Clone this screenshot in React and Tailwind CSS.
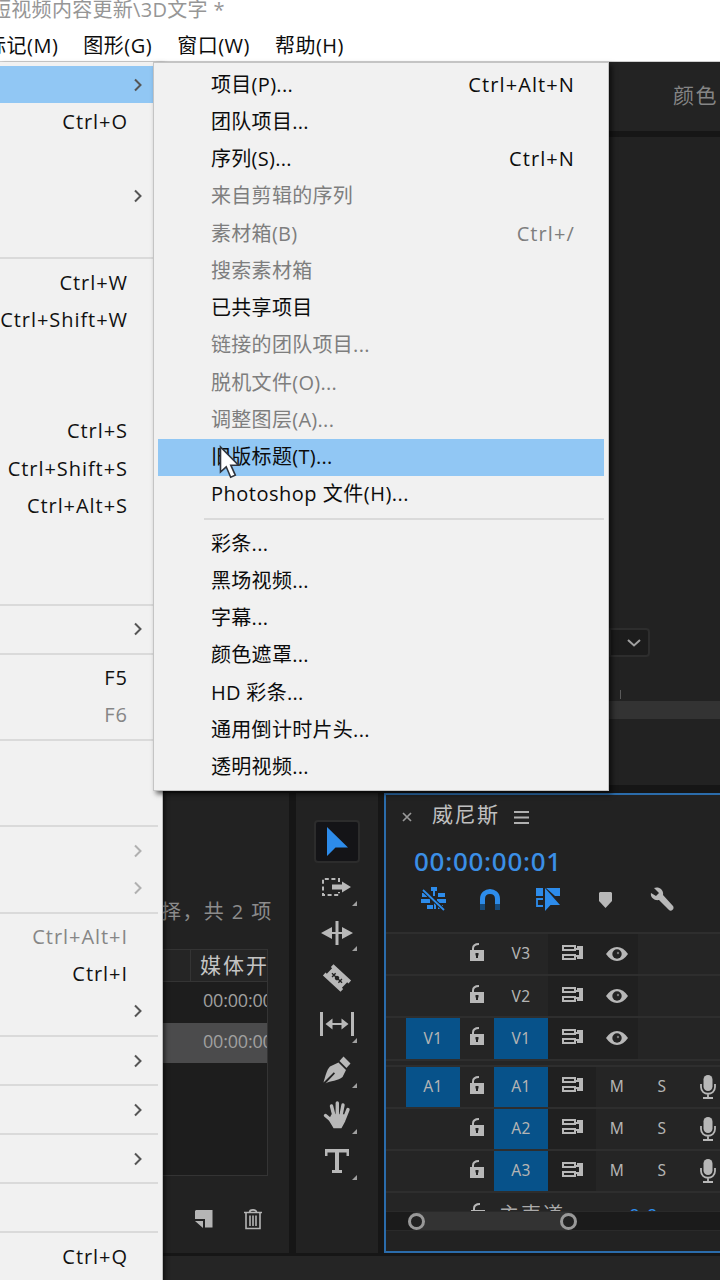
import clsx from 'clsx';

const MENU_BAR = ['标记(M)', '图形(G)', '窗口(W)', '帮助(H)'];

// null is a separator, {} is a row whose label lies outside the window
const FILE_MENU = [
  { arrow: true, active: true },
  { keys: 'Ctrl+O' },
  {},
  { arrow: true },
  {},
  null,
  { keys: 'Ctrl+W' },
  { keys: 'Ctrl+Shift+W' },
  {},
  {},
  { keys: 'Ctrl+S' },
  { keys: 'Ctrl+Shift+S' },
  { keys: 'Ctrl+Alt+S' },
  {},
  {},
  null,
  { arrow: true },
  null,
  { keys: 'F5' },
  { keys: 'F6', disabled: true },
  null,
  {},
  {},
  null,
  { arrow: true, disabled: true },
  { arrow: true, disabled: true },
  null,
  { keys: 'Ctrl+Alt+I', disabled: true },
  { keys: 'Ctrl+I' },
  { arrow: true },
  null,
  { arrow: true },
  null,
  { arrow: true },
  null,
  { arrow: true },
  null,
  {},
  null,
  { keys: 'Ctrl+Q' },
  null,
];

const NEW_MENU = [
  { label: '项目(P)...', keys: 'Ctrl+Alt+N' },
  { label: '团队项目...' },
  { label: '序列(S)...', keys: 'Ctrl+N' },
  { label: '来自剪辑的序列', disabled: true },
  { label: '素材箱(B)', keys: 'Ctrl+/', disabled: true },
  { label: '搜索素材箱', disabled: true },
  { label: '已共享项目' },
  { label: '链接的团队项目...', disabled: true },
  { label: '脱机文件(O)...', disabled: true },
  { label: '调整图层(A)...', disabled: true },
  { label: '旧版标题(T)...', active: true },
  { label: 'Photoshop 文件(H)...', wide: true },
  null,
  { label: '彩条...' },
  { label: '黑场视频...' },
  { label: '字幕...' },
  { label: '颜色遮罩...' },
  { label: 'HD 彩条...' },
  { label: '通用倒计时片头...' },
  { label: '透明视频...' },
];

const VIDEO_TRACKS = [
  { name: 'V3' },
  { name: 'V2' },
  { name: 'V1', source: 'V1', on: true },
];

const AUDIO_TRACKS = [
  { name: 'A1', source: 'A1', on: true },
  { name: 'A2', on: true },
  { name: 'A3', on: true },
];

function Chevron({ className }) {
  return (
    <svg viewBox="0 0 8 14" className={clsx('h-3.5 w-2', className)} fill="none" stroke="currentColor" strokeWidth="2">
      <path d="M1 1.5 6.5 7 1 12.5" />
    </svg>
  );
}

function FileMenu() {
  return (
    <div className="absolute top-[62px] left-0 h-[1218px] w-[163px] border-r border-[#bdbdbd] bg-[#f1f1f1] pt-[4.2px] shadow-[2px_2px_4px_#0008]">
      {FILE_MENU.map((item, index) =>
        item === null ? (
          <div key={index} className="flex h-[11.9px] items-center pr-1">
            <div className="h-0.5 w-full bg-[#dadada]" />
          </div>
        ) : (
          <div
            key={index}
            className={clsx(
              'flex h-[37.2px] items-center justify-end whitespace-nowrap',
              item.active && 'bg-[#91c7f4]',
              item.disabled ? 'text-[#868686]' : 'text-[#111]'
            )}
          >
            {item.keys && <span className="mr-[34px] tracking-[0.95px]">{item.keys}</span>}
            {item.arrow && (
              <Chevron className={clsx('mr-5', item.disabled ? 'text-[#b0b0b0]' : 'text-[#555]')} />
            )}
          </div>
        )
      )}
    </div>
  );
}

function NewMenu() {
  return (
    <div className="absolute top-[62px] left-[153px] h-[729px] w-[456px] border border-[#c4c4c4] bg-[#f1f1f1] px-1 pt-[3px] shadow-[3px_3px_5px_#0009]">
      {NEW_MENU.map((item, index) =>
        item === null ? (
          <div key={index} className="flex h-3 items-center pl-[46px]">
            <div className="h-0.5 w-full bg-[#dadada]" />
          </div>
        ) : (
          <div
            key={index}
            className={clsx(
              'flex h-[37.25px] items-center justify-between pr-[29px] pl-[53px] whitespace-nowrap',
              item.active && 'bg-[#91c7f4]',
              item.disabled ? 'text-[#7e7e7e]' : 'text-[#0c0c0c]'
            )}
          >
            <span className={clsx(item.wide && 'tracking-[0.5px]')}>{item.label}</span>
            <span className="tracking-[1.1px]">{item.keys}</span>
          </div>
        )
      )}
    </div>
  );
}

function Pointer() {
  return (
    <svg className="absolute top-[445px] left-[218px] h-9 w-6" viewBox="0 0 24 36">
      <path d="M2.5 2v25l5.7-5.2 4.5 10.4 4.6-2-4.5-10h7.7z" fill="#fff" stroke="#30343c" strokeWidth="1.6" />
    </svg>
  );
}

function Monitor() {
  return (
    <div className="flex h-[723px] flex-col bg-[#161616] pl-[609px]">
      <div className="h-[69px] bg-[#232323] pt-[18px] pl-16 text-[21px] leading-[30px] tracking-[1.6px] whitespace-nowrap text-[#858585]">
        颜色
      </div>
      <div className="mt-1.5 flex-1 bg-[#222]">
        <div className="mt-[491px] flex h-[29px] w-[41px] items-center justify-end rounded-r border-2 border-[#2d2d2d] bg-[#1c1c1c] pr-[7px]">
          <svg viewBox="0 0 14 8" className="h-2 w-3.5" fill="none" stroke="#a0a0a0" strokeWidth="2">
            <path d="m1 1 6 5.5L13 1" />
          </svg>
        </div>
        <div className="mt-[33px] ml-[11px] h-[9px] w-px bg-[#5a5a5a]" />
        <div className="mt-0.5 h-[18px] bg-[#333]" />
      </div>
    </div>
  );
}

function ProjectPanel() {
  return (
    <div className="w-[289px] shrink-0 bg-[#222] pl-[163px]">
      <div className="h-[156px] overflow-hidden pt-[104px] text-[20px] leading-[30px] tracking-[1.4px] whitespace-nowrap text-[#8c8c8c]">
        <span className="-ml-0.5">择，共 2 项</span>
      </div>
      <div className="h-[227px] w-[105px] overflow-hidden border-y border-r border-[#343434] bg-[#1d1d1d]">
        <div className="flex h-8 items-center border-b border-[#343434] bg-[#252525] text-[21px] tracking-[2px] whitespace-nowrap text-[#c4c4c4]">
          <div className="h-full w-7 shrink-0 border-r border-[#343434]" />
          <span className="ml-[9px]">媒体开始</span>
        </div>
        <div className="flex h-[41px] items-center pb-1 pl-10 text-[18px] tracking-[-0.2px] text-[#a0a0a0]">
          00:00:00:00
        </div>
        <div className="flex h-10 items-center bg-[#4b4b4c] pb-1 pl-10 text-[18px] tracking-[-0.2px] text-[#a0a0a0]">
          00:00:00:00
        </div>
      </div>
      <div className="flex items-center pt-8 pl-8">
        <svg viewBox="0 0 18 18" className="h-[18px] w-[18px]" fill="#b5b5b5">
          <path d="M1 0h16.500v17.500H10V9H0V1zM0 11h8v7z" />
        </svg>
        <svg viewBox="0 0 20 22" className="ml-[30px] h-[22px] w-5" fill="none" stroke="#b5b5b5" strokeWidth="1.600">
          <path d="M1 4.5h18M6.500 4.500C6.500 1 13.500 1 13.500 4.500M3 5v15.500h14V5M7 7.500v10.500M10 7.500v10.500M13 7.500v10.500" />
        </svg>
      </div>
    </div>
  );
}

const TOOLS = [
  // track select
  <g key="a">
    <path d="M18 7V4H2v16h16v-3" fill="none" stroke="#b8b8b8" strokeWidth="2" strokeDasharray="4 2.600" />
    <path d="M11 9.500h10V6.500l9 5.500-9 5.500v-3H11z" />
  </g>,
  // ripple edit
  <path key="r" d="M14.500 0h3v24h-3zM0 12l11-6v5h10V6l11 6-11 6v-5H11v5z" />,
  // razor
  <g key="z" transform="translate(16 12) rotate(43) scale(.86) translate(-16 -12)">
    <path d="M2 3h28v4.500h-2v9h2V21H2v-4.500h2v-9H2z" />
    <path d="M8 12h16M11 9v6M21 9v6" stroke="#222" strokeWidth="1.600" />
    <circle cx="16" cy="12" r="2.600" fill="#222" />
  </g>,
  // slip
  <path key="s" d="M-1 0h3v24h-3zM30 0h3v24h-3zM4.500 12l7-5.500v4.500h9V6.500l7 5.500-7 5.500V13h-9v4.500z" />,
  // pen
  <g key="p">
    <path d="M2.500 24.500C4.500 18 5.500 12 9 8.500l8.500-4 7.500 7.500-3.500 7C17.500 23 9 22.500 4.500 25.500L14 15.500l-1.200-1.200z" />
    <path d="m18.500 3 4-4.500 7 7-4 4.500z" />
  </g>,
  // hand
  <g key="h" fill="none" stroke="#b8b8b8" strokeWidth="3.400" strokeLinecap="round">
    <path d="m10.500 3 2.800 11M16.300 0v12M22 2l-2.300 12M27 6.500l-4 10M4.500 12.500l6 5" />
    <path d="M11 12h11.500l1 6-3.500 6.500h-7L8.500 17z" fill="#b8b8b8" strokeWidth="1.500" />
  </g>,
  // type
  <path key="t" d="M4 0h24v7h-2.500V3.500h-7.500V21h3v3H11v-3h3V3.500H6.500V7H4z" />,
];

function ToolBar() {
  return (
    <div className="ml-[7px] flex w-[82px] shrink-0 flex-col items-center bg-[#222] pt-[27px]">
      <div className="mb-px flex h-[43px] w-[46px] items-center justify-center rounded border-2 border-[#2c2c2c] bg-[#141417]">
        <svg viewBox="0 0 21 29" className="h-[29px] w-[21px]" fill="#2d8ceb">
          <path d="M0 0v29l8.500-8.500H21z" />
        </svg>
      </div>
      {TOOLS.map((icon, index) => (
        <div key={index} className="relative flex h-[45.7px] w-[46px] items-center justify-center">
          <svg viewBox="0 0 32 24" className="h-6 w-8 overflow-visible" fill="#b8b8b8">
            {icon}
          </svg>
          {index !== 2 && (
            <svg viewBox="0 0 5 5" className="absolute right-[3px] bottom-1 h-[5px] w-[5px]" fill="#a0a0a0">
              <path d="M5 0v5H0z" />
            </svg>
          )}
        </div>
      ))}
    </div>
  );
}

function Lock() {
  return (
    <svg viewBox="0 0 16 18" className="h-[18px] w-4" fill="#b8b8b8">
      <path d="M1 7h14v11H1z" />
      <path d="M4 8V5.500C4 2.500 6 1 10 1" fill="none" stroke="#b8b8b8" strokeWidth="2" />
      <path d="M6.500 10h3v2.500H9V15H7v-2.500h-.5z" fill="#222" />
    </svg>
  );
}

function SyncLock() {
  return (
    <svg viewBox="0 0 21 17" className="h-[17px] w-[21px]" fill="none" stroke="#b8b8b8" strokeWidth="2">
      <path d="M1 2h12v4H1zM1 11h12v4H1z" />
      <path d="M13 5h3V4M13 12h3v1" />
      <path d="M15 2h6v13h-6v-3h2V5h-2z" fill="#b8b8b8" stroke="none" />
    </svg>
  );
}

function Eye() {
  return (
    <svg viewBox="0 0 22 14" className="h-3.5 w-[22px]">
      <path d="M0 7C6-2.300 16-2.300 22 7c-6 9.300-16 9.300-22 0z" fill="#b8b8b8" />
      <circle cx="11" cy="7" r="4.700" fill="#222" />
      <circle cx="12" cy="6" r="1.200" fill="#777" />
    </svg>
  );
}

function Mic() {
  return (
    <svg viewBox="0 0 16 24" className="h-6 w-4" fill="none" stroke="#b8b8b8" strokeWidth="1.800">
      <rect x="3.500" y="0" width="9" height="16" rx="4.500" fill="#b8b8b8" stroke="none" />
      <path d="M1 9v3c0 9 14 9 14 0V9M8 18.500V22M3 23h10" />
    </svg>
  );
}

function Track({ track, audio }) {
  return (
    <div className="flex h-[42.2px] border-b-2 border-[#2e2e2e] pl-5 font-['Noto_Sans','Liberation_Sans',sans-serif] text-[15.500px] text-[#b4b4b4]">
      <div className={clsx('flex w-[54px] shrink-0 items-center justify-center', track.source && 'bg-[#07528a]')}>
        {track.source}
      </div>
      <div className="flex w-[34px] shrink-0 items-center justify-center pb-1">
        <Lock />
      </div>
      <div className={clsx('flex w-[54px] shrink-0 items-center justify-center', track.on && 'bg-[#07528a]')}>
        {track.name}
      </div>
      <div className="flex w-12 shrink-0 items-center justify-center bg-[#202020] pb-1">
        <SyncLock />
      </div>
      <div className={clsx('flex w-[42px] shrink-0 items-center justify-center', !audio && 'bg-[#202020]')}>
        {audio ? 'M' : <Eye />}
      </div>
      {audio && (
        <>
          <div className="flex w-12 shrink-0 items-center justify-center">S</div>
          <div className="flex w-11 shrink-0 items-center justify-center">
            <Mic />
          </div>
        </>
      )}
    </div>
  );
}

function TimelineTools() {
  return (
    <div className="flex h-[26px] items-center pl-[35px]">
      <svg viewBox="0 0 26 24" className="h-6 w-[26px]" fill="#2d8ceb">
        <path d="M10 0h6v4h-2v5h-2V4h-2zM17 6h7v4h-7zM1 6h5v4H1zM0 12h9v4H0zM16 12h9v4h-9zM6 18h6v4H6zM13 16h2v6h-2zM17 18h5v4h-5z" />
        <path d="m2 3 21 20" stroke="#222" strokeWidth="4" />
        <path d="m2 3 21 20" stroke="#2d8ceb" strokeWidth="1.800" />
      </svg>
      <svg viewBox="0 0 20 21" className="ml-[33px] h-[21px] w-5" fill="none" strokeWidth="5">
        <path d="M2.500 15V10c0-10 15-10 15 0v5" stroke="#2d8ceb" />
        <path d="M2.500 15v6M17.500 15v6" stroke="#174b7c" />
      </svg>
      <svg viewBox="0 0 25 24" className="ml-9 h-6 w-[25px]" fill="#2d8ceb">
        <path d="M0 1h7v8H0zM9 1h15v8h-5L10 1z" />
        <path d="M7 12H1v7h6" fill="none" stroke="#2d8ceb" strokeWidth="1.800" />
        <path d="M9 1v23l5.500-6H24z" />
      </svg>
      <svg viewBox="0 0 14 16" className="ml-[38px] mt-0.5 h-4 w-[14px] shrink-0" fill="#b8b8b8">
        <path d="M1 0h11l1 1v8l-6.500 7L0 9V1z" />
      </svg>
      <svg viewBox="0 0 24 25" className="ml-[37px] h-[25px] w-6" fill="#b8b8b8">
        <path d="M4 1c5-2 10 2 9 7l10 11c2 3-2 6-4 4L9 13C4 14 0 10 1 6l5 3 3-3z" />
      </svg>
    </div>
  );
}

function ScrollKnob() {
  return <div className="h-[17px] w-[17px] rounded-full border-[3px] border-[#999] bg-[#222]" />;
}

function Timeline() {
  return (
    <div className="ml-1.5 h-[460px] w-[360px] shrink-0 overflow-hidden border-2 border-[#2b6cab] bg-[#222]">
      <div className="flex h-[39px] items-center pl-4 text-[#c0c0c0]">
        <svg viewBox="0 0 10 10" className="mt-1 h-2.5 w-2.5" stroke="#999" strokeWidth="1.700">
          <path d="m1 1 8 8M9 1 1 9" />
        </svg>
        <span className="ml-5 text-[21px] tracking-[1.500px]">威尼斯</span>
        <svg viewBox="0 0 15 14" className="mt-1 ml-3.5 h-3.5 w-[15px]" stroke="#b0b0b0" strokeWidth="2">
          <path d="M0 2h15M0 7.500h15M0 13h15" />
        </svg>
      </div>
      <div className="mt-1 flex h-[46px] items-center pl-[28px] font-['Noto_Sans','Liberation_Sans',sans-serif] text-[26px] font-medium tracking-[0.700px] text-[#3b8fe6]">
        00:00:00:01
      </div>
      <div className="mt-0.5">
        <TimelineTools />
      </div>
      <div className="mt-5 border-t-2 border-[#2e2e2e] bg-[#252525]">
        {VIDEO_TRACKS.map((track) => (
          <Track key={track.name} track={track} />
        ))}
        <div className="h-1.5 border-b-2 border-[#2e2e2e]" />
        {AUDIO_TRACKS.map((track) => (
          <Track key={track.name} track={track} audio />
        ))}
        <div className="flex h-[18px] overflow-hidden pt-2 pl-[84px]">
          <div className="w-[29px] shrink-0 pt-0.5">
            <Lock />
          </div>
          <span className="text-[20px] leading-[27px] tracking-[2px] text-[#aaa]">主声道</span>
          <span className="ml-[64px] text-[19px] leading-[29px] tracking-[1px] text-[#2d8ceb]">0.0</span>
        </div>
      </div>
      <div className="flex h-5 items-center border-y border-[#2a2a2a] bg-[#1b1b1b] pl-[22px]">
        <div className="flex h-full w-[169px] shrink-0 items-center justify-between rounded-full bg-[#333]">
          <ScrollKnob />
          <ScrollKnob />
        </div>
      </div>
    </div>
  );
}

export default function App() {
  return (
    <div className="relative h-[1280px] w-[720px] overflow-hidden bg-[#161616] font-['Open_Sans','Noto_Sans_CJK_SC',sans-serif] text-[20px] tracking-[0.3px]">
      <header className="h-[62px] border-b border-[#cfcfcf] bg-white">
        <div className="-ml-[9px] h-7 text-[20px] leading-[20px] tracking-[0.3px] whitespace-nowrap text-[#969696]">
          短视频内容更新\3D文字 *
        </div>
        <nav className="-ml-[14px] flex gap-[25px] text-[20px] leading-[35px] tracking-[0.500px] whitespace-nowrap text-[#0c0c0c]">
          {MENU_BAR.map((label) => (
            <span key={label}>{label}</span>
          ))}
        </nav>
      </header>
      <Monitor />
      <div className="mt-2 flex h-[460px]">
        <ProjectPanel />
        <ToolBar />
        <Timeline />
      </div>
      <div className="mt-[3px] h-6 bg-[#252525]" />
      <FileMenu />
      <NewMenu />
      <Pointer />
    </div>
  );
}
